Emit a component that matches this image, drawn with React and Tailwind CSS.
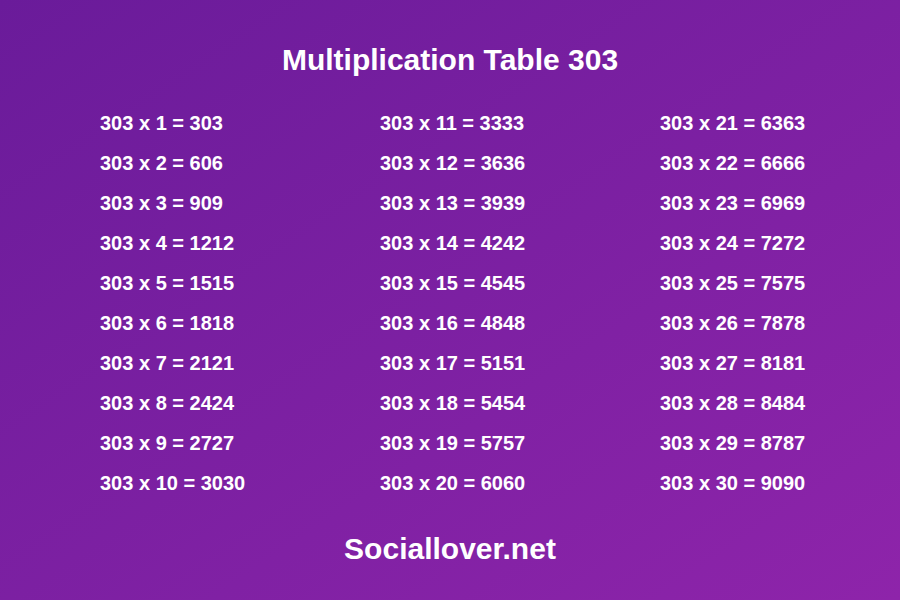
import React from 'react';

const base = 303;

function App() {
  const cols = [0, 1, 2].map((c) =>
    Array.from({ length: 10 }, (_, i) => c * 10 + i + 1)
  );

  return (
    <div
      className="w-[900px] h-[600px] flex flex-col bg-gradient-to-br from-[#6a1b9a] to-[#8e24aa] text-white font-bold"
      style={{ fontFamily: '"Liberation Sans", Arial, sans-serif' }}
    >
      <h1 className="mt-[42px] h-[36px] leading-[36px] text-center text-[30px]">
        Multiplication Table {base}
      </h1>
      <div className="mt-[25px] pl-[100px] grid grid-cols-[280px_280px_280px]">
        {cols.map((col, ci) => (
          <div key={ci} className="flex flex-col">
            {col.map((n) => (
              <div key={n} className="h-[40px] leading-[40px] text-[20px] whitespace-nowrap">
                {base} x {n} = {base * n}
              </div>
            ))}
          </div>
        ))}
      </div>
      <div className="mt-[28px] h-[36px] leading-[36px] text-center text-[30px]">
        Sociallover.net
      </div>
    </div>
  );
}

export default App;
